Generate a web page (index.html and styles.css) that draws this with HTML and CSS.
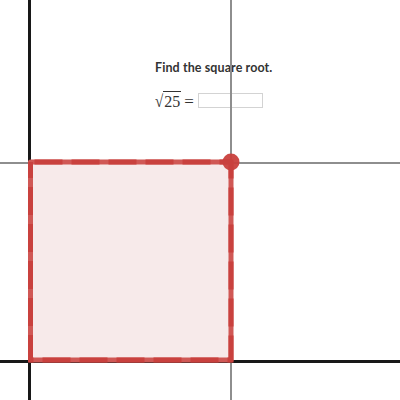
FILE: index.html
```html
<!DOCTYPE html>
<html>
<head>
<meta charset="utf-8">
<link rel="stylesheet" href="styles.css">
</head>
<body>
<div class="stage">
  <div class="prompt">
    <div class="question">Find the square root.</div>
    <div class="answer-row">
      <span class="math"><span class="radical">√</span><span class="radicand">25</span><span class="eq">=</span></span>
      <span class="answer-box"></span>
    </div>
  </div>
  <svg class="graph" width="400" height="400" viewBox="0 0 400 400">
    <rect x="30" y="162" width="201" height="199" fill="#f7eaea"/>
    <line x1="231" y1="0" x2="231" y2="400" stroke="#8e8e8e" stroke-width="2"/>
    <line x1="0" y1="163" x2="400" y2="163" stroke="#8e8e8e" stroke-width="2"/>
    <line x1="29.5" y1="0" x2="29.5" y2="400" stroke="#181818" stroke-width="3"/>
    <line x1="0" y1="361.5" x2="400" y2="361.5" stroke="#181818" stroke-width="3"/>
    <rect x="30.5" y="162" width="200.5" height="198" fill="none" stroke="#d05855" stroke-width="5" stroke-linejoin="round"/>
    <rect x="30.5" y="162" width="200.5" height="198" fill="none" stroke="#c9413e" stroke-width="5" stroke-dasharray="28 9" stroke-dashoffset="-4"/>
    <circle cx="231" cy="162" r="8.5" fill="#c9403d" fill-opacity="0.95"/>
  </svg>
</div>
</body>
</html>
```
FILE: styles.css
```css
html, body {
  margin: 0;
  padding: 0;
  background: #ffffff;
}
.stage {
  position: relative;
  width: 400px;
  height: 400px;
  overflow: hidden;
}
.prompt {
  padding-top: 60px;
  padding-left: 155px;
  display: flex;
  flex-direction: column;
  gap: 15px;
}
.question {
  font-family: Lato, "Liberation Sans", sans-serif;
  font-weight: 700;
  font-size: 12.5px;
  color: #333333;
  line-height: 16px;
  letter-spacing: 0.1px;
}
.answer-row {
  display: flex;
  align-items: center;
  gap: 4px;
}
.math {
  display: flex;
  align-items: flex-end;
  font-family: "Liberation Serif", "DejaVu Serif", serif;
  font-size: 16px;
  color: #333333;
  line-height: 17px;
}
.radical {
  font-size: 15px;
  transform: scaleY(1.15);
  display: inline-block;
}
.radicand {
  border-top: 1px solid #333333;
  padding: 1px 1px 0 1px;
}
.eq {
  margin-left: 3px;
  font-size: 17px;
}
.answer-box {
  display: block;
  width: 63px;
  height: 13px;
  border: 1px solid #d3d3d3;
  background: #ffffff;
}
.graph {
  position: absolute;
  left: 0;
  top: 0;
  pointer-events: none;
}
```
